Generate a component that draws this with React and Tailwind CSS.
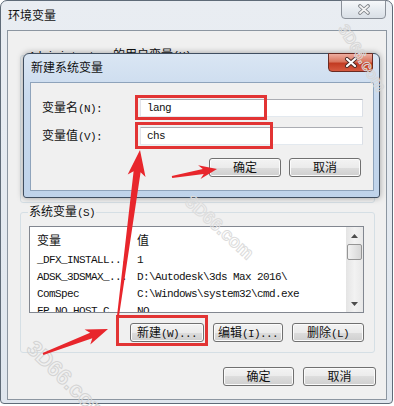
import React from "react";

const CJK = "font-['Noto_Sans_CJK_SC',sans-serif] text-[12px]";
const MONO = "font-['Liberation_Mono','Noto_Sans_CJK_SC',monospace] text-[11px] tracking-[-0.6px]";

function Mixed({ parts }) {
  return (
    <span className="whitespace-pre leading-[12px]">
      {parts.map((p, i) =>
        /[\u4e00-\u9fff]/.test(p) ? (
          <span key={i} className={CJK}>{p}</span>
        ) : (
          <span key={i} className={MONO}>{p}</span>
        )
      )}
    </span>
  );
}

function Btn({ w, parts }) {
  return (
    <div
      className={`${w} h-[19px] flex items-center justify-center rounded-[3px] border border-[#707070] bg-[linear-gradient(180deg,#f3f3f3_0%,#ebebeb_50%,#dddddd_50%,#cfcfcf_100%)] shadow-[inset_0_0_0_1px_#fbfbfb] text-[#111]`}
    >
      <Mixed parts={parts} />
    </div>
  );
}

function arrow(tx, ty, hx, hy, w0, w1, hl, hw) {
  const dx = hx - tx, dy = hy - ty;
  const L = Math.hypot(dx, dy);
  const ux = dx / L, uy = dy / L;
  const nx = -uy, ny = ux;
  const bx = hx - ux * hl, by = hy - uy * hl;
  const cx = bx - ux * 4, cy = by - uy * 4;
  const p = (x, y) => `${x.toFixed(1)},${y.toFixed(1)}`;
  return [
    p(tx + (nx * w0) / 2, ty + (ny * w0) / 2),
    p(bx + (nx * w1) / 2, by + (ny * w1) / 2),
    p(cx + nx * hw, cy + ny * hw),
    p(hx, hy),
    p(cx - nx * hw, cy - ny * hw),
    p(bx - (nx * w1) / 2, by - (ny * w1) / 2),
    p(tx - (nx * w0) / 2, ty - (ny * w0) / 2),
  ].join(" ");
}

function XGlyph({ dark, light, w = 3.6, wi = 1.8 }) {
  return (
    <svg width="14" height="11" viewBox="0 0 14 11">
      <path d="M3 2 L11 9 M11 2 L3 9" stroke={dark} strokeWidth={w} strokeLinecap="round" fill="none" />
      <path d="M3 2 L11 9 M11 2 L3 9" stroke={light} strokeWidth={wi} strokeLinecap="round" fill="none" />
    </svg>
  );
}

const rows = [
  ["_DFX_INSTALL...", "1"],
  ["ADSK_3DSMAX_...", "D:\\Autodesk\\3ds Max 2016\\"],
  ["ComSpec", "C:\\Windows\\system32\\cmd.exe"],
  ["FP_NO_HOST_C...", "NO"],
];

export default function App() {
  return (
    <div className="relative w-[394px] h-[406px] overflow-hidden bg-white text-[12px] leading-[12px]">
      {/* Outer window */}
      <div className="w-[393px] h-[404px] flex flex-col rounded-t-[7px] rounded-b-[4px] border border-[#5f6b78] bg-[linear-gradient(180deg,#e9edf2_0%,#dfe6ee_100%)]">
        <div className="h-[29px] flex items-start justify-between">
          <div className={`${CJK} pl-[7px] pt-[8px] leading-[12px] text-[#111]`}>环境变量</div>
          <div className="-mt-[1px] mr-[6px] w-[45px] h-[19px] flex items-center justify-center rounded-b-[4px] border border-[#8a9099] bg-[linear-gradient(180deg,#f6f8fa_0%,#e6ebf0_50%,#d9dfe6_100%)]">
            <XGlyph dark="#7b7f85" light="#f4f4f4" />
          </div>
        </div>
        <div className="ml-[6px] w-[380px] h-[370px] border border-[#8c96a1] bg-[#f0f0f0] flex flex-col">
          <fieldset className="ml-[12px] mt-[17px] w-[355px] h-[155px] rounded-[3px] border border-[#d5dfe5]">
            <legend className="ml-[7px] px-[1px] leading-[12px] text-[#111]">
              <Mixed parts={["Administrator ", "的用户变量", "(U)"]} />
            </legend>
          </fieldset>
          <fieldset className="ml-[12px] mt-[2px] w-[355px] h-[148px] rounded-[3px] border border-[#d5dfe5]">
            <legend className="ml-[7px] px-[1px] leading-[12px] text-[#111]">
              <Mixed parts={["系统变量", "(S)"]} />
            </legend>
            <div className="pl-[8px] pt-[7px]">
              <div className="w-[335px] h-[87px] border border-[#828790] bg-white flex">
                <div className="flex-1 flex flex-col overflow-hidden">
                  <div className="h-[24px] flex items-center pl-[7px] pt-[2px] shrink-0 text-[#111]">
                    <div className="w-[100px]"><Mixed parts={["变量"]} /></div>
                    <div><Mixed parts={["值"]} /></div>
                  </div>
                  {rows.map(([a, b]) => (
                    <div key={a} className="h-[17px] flex items-center pl-[7px] shrink-0 text-[#111]">
                      <div className={`w-[100px] ${MONO} leading-[14px] whitespace-pre`}>{a}</div>
                      <div className={`${MONO} leading-[14px] whitespace-pre`}>{b}</div>
                    </div>
                  ))}
                </div>
                <div className="w-[17px] flex flex-col bg-[linear-gradient(90deg,#e4e4e4_0%,#f2f2f2_50%,#e8e8e8_100%)]">
                  <div className="h-[17px] flex items-center justify-center">
                    <svg width="7" height="4" viewBox="0 0 7 4"><path d="M0 4 L3.5 0 L7 4 Z" fill="#4d4d4d" /></svg>
                  </div>
                  <div className="mx-[1px] h-[16px] rounded-[2px] border border-[#959595] bg-[linear-gradient(90deg,#f2f2f2_0%,#e4e4e4_50%,#d6d6d6_100%)]" />
                  <div className="flex-1" />
                  <div className="h-[17px] flex items-center justify-center">
                    <svg width="7" height="4" viewBox="0 0 7 4"><path d="M0 0 L3.5 4 L7 0 Z" fill="#4d4d4d" /></svg>
                  </div>
                </div>
              </div>
              <div className="w-[335px] mt-[10px] flex justify-end gap-[9px]">
                <Btn w="w-[74px]" parts={["新建", "(W)..."]} />
                <Btn w="w-[70px]" parts={["编辑", "(I)..."]} />
                <Btn w="w-[72px]" parts={["删除", "(L)"]} />
              </div>
            </div>
          </fieldset>
          <div className="mt-[14px] pr-[10px] flex justify-end gap-[9px]">
            <Btn w="w-[71px]" parts={["确定"]} />
            <Btn w="w-[73px]" parts={["取消"]} />
          </div>
        </div>
      </div>

      {/* Inner dialog */}
      <div className="absolute left-[23px] top-[53px] w-[357px] h-[145px] flex flex-col rounded-t-[6px] rounded-b-[3px] border border-[#3f4e60] bg-[linear-gradient(180deg,#dae6f3_0%,#c9daee_30%,#bfd3ea_100%)] shadow-[0_0_6px_rgba(0,0,0,0.35)]">
        <div className="h-[28px] flex items-start justify-between">
          <div className={`${CJK} pl-[7px] pt-[7px] leading-[12px] text-[#111]`}>新建系统变量</div>
          <div className="-mt-[1px] mr-[6px] w-[45px] h-[19px] flex items-center justify-center rounded-b-[4px] border border-[#6b2b22] bg-[linear-gradient(180deg,#eeada0_0%,#d9765f_45%,#c23b22_55%,#d65a40_100%)]">
            <XGlyph dark="#4a2a26" light="#ffffff" w={4} wi={2.2} />
          </div>
        </div>
        <div className="ml-[6px] w-[344px] h-[109px] border border-[#8ea3bb] bg-[#f0f0f0] flex flex-col">
          <div className="mt-[16px] h-[18px] pl-[11px] pr-[10px] flex items-center">
            <div className="w-[98px] text-[#111]"><Mixed parts={["变量名", "(N):"]} /></div>
            <div className={`flex-1 h-[18px] border border-[#abadb3] border-b-[#e3e9ef] border-l-[#e2e3ea] border-r-[#dbdfe6] bg-white pl-[6px] flex items-center ${MONO} text-[#111]`}>lang</div>
          </div>
          <div className="mt-[10px] h-[18px] pl-[11px] pr-[10px] flex items-center">
            <div className="w-[98px] text-[#111]"><Mixed parts={["变量值", "(V):"]} /></div>
            <div className={`flex-1 h-[18px] border border-[#abadb3] border-b-[#e3e9ef] border-l-[#e2e3ea] border-r-[#dbdfe6] bg-white pl-[6px] flex items-center ${MONO} text-[#111]`}>chs</div>
          </div>
          <div className="mt-[13px] pr-[12px] flex justify-end gap-[8px]">
            <Btn w="w-[72px]" parts={["确定"]} />
            <Btn w="w-[72px]" parts={["取消"]} />
          </div>
        </div>
      </div>

      {/* Watermarks */}
      <div className="pointer-events-none absolute left-[30px] top-[334px] rotate-[44deg] origin-left font-['Liberation_Sans',sans-serif] text-[22px] leading-[22px] font-bold text-transparent [-webkit-text-stroke:1px_#d4d4d4]">3D66.com</div>
      <div className="pointer-events-none absolute left-[188px] top-[190px] rotate-[42deg] origin-left font-['Liberation_Sans',sans-serif] text-[18px] leading-[18px] font-bold text-transparent [-webkit-text-stroke:1px_#dcdcdc]">3D66.com</div>
      <div className="pointer-events-none absolute left-[342px] top-[18px] rotate-[58deg] origin-left font-['Liberation_Sans',sans-serif] text-[16px] leading-[16px] font-bold text-transparent [-webkit-text-stroke:1px_#d8d8d8]">3D66.com</div>

      {/* Red annotation boxes */}
      <div className="pointer-events-none absolute left-[135px] top-[95px] w-[132px] h-[25px] border-[3px] border-[#e23434]" />
      <div className="pointer-events-none absolute left-[135px] top-[122px] w-[138px] h-[27px] border-[3px] border-[#e23434]" />
      <div className="pointer-events-none absolute left-[116px] top-[315px] w-[92px] h-[31px] border-[3px] border-[#e23434]" />

      {/* Arrows */}
      <svg className="pointer-events-none absolute left-0 top-0" width="394" height="406" viewBox="0 0 394 406">
        <polygon points={arrow(172, 177, 217, 169, 2, 5, 14, 7)} fill="#e8262c" />
        <polygon points={arrow(118, 316, 140, 150, 2, 7, 22, 9)} fill="#e8262c" />
        <polygon points={arrow(43, 354, 108, 329, 2, 6, 18, 8)} fill="#e8262c" />
      </svg>
    </div>
  );
}
